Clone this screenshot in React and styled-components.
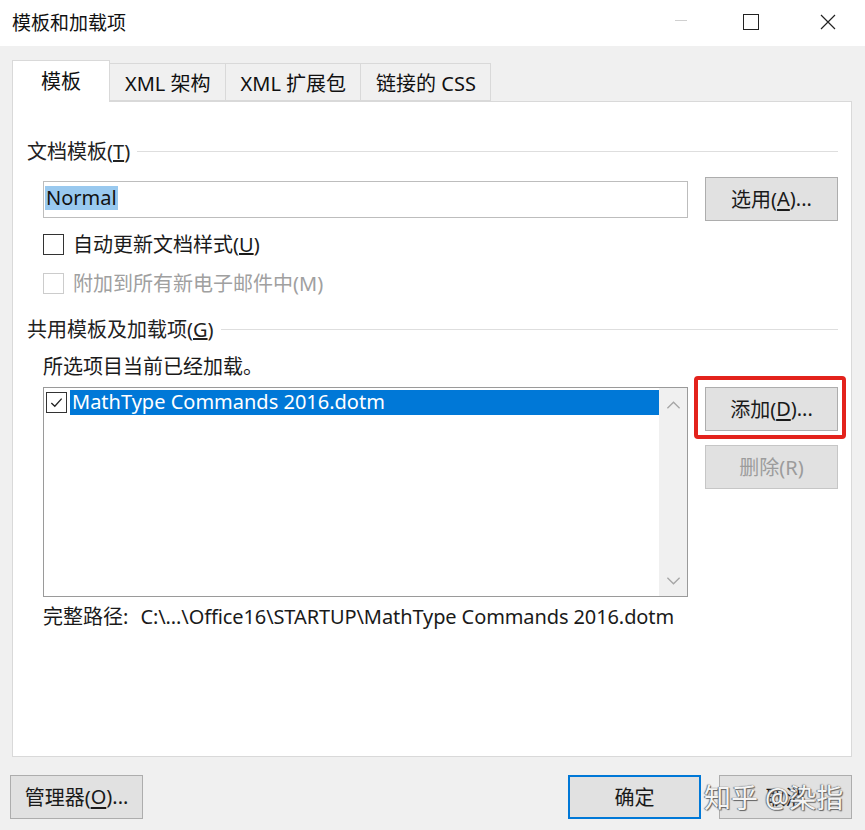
import React from "react";
import styled, { createGlobalStyle } from "styled-components";

const GlobalStyle = createGlobalStyle`
  html, body {
    margin: 0;
    padding: 0;
    background: #ffffff;
  }
  #root {
    width: 865px;
    height: 830px;
  }
  * {
    box-sizing: border-box;
  }
`;

const FONT = `"Noto Sans", "Noto Sans CJK SC", sans-serif`;

function TemplateDialog() {
  return (
    <Window>
      <TitleBar>
        <Title>模板和加载项</Title>
        <Controls>
          <Minimize />
          <Maximize />
          <CloseIcon viewBox="0 0 16 16">
            <path d="M1 1 L15 15 M15 1 L1 15" stroke="#222" strokeWidth="1.2" fill="none" />
          </CloseIcon>
        </Controls>
      </TitleBar>

      <Body>
        <TabBar>
          <Tab active>模板</Tab>
          <Tab>XML 架构</Tab>
          <Tab>XML 扩展包</Tab>
          <Tab>链接的 CSS</Tab>
        </TabBar>

        <Panel>
          <SectionHeader top={34}>
            <span>
              文档模板(<u>T</u>)
            </span>
            <Rule />
          </SectionHeader>

          <FieldRow top={13}>
            <TextBox>
              <Selected>Normal</Selected>
            </TextBox>
            <Button>
              选用(<u>A</u>)...
            </Button>
          </FieldRow>

          <CheckRow top={8}>
            <Box />
            <span>
              自动更新文档样式(<u>U</u>)
            </span>
          </CheckRow>
          <CheckRow top={9} disabled>
            <Box disabled />
            <span>附加到所有新电子邮件中(M)</span>
          </CheckRow>

          <SectionHeader top={16}>
            <span>
              共用模板及加载项(<u>G</u>)
            </span>
            <Rule />
          </SectionHeader>

          <Note>所选项目当前已经加载。</Note>

          <ListRow>
            <ListBox>
              <ListItems>
                <ListItem>
                  <Box checked>
                    <svg viewBox="0 0 16 16" width="15" height="15">
                      <path d="M2.5 8.5 L6.2 12 L13.5 3.8" stroke="#222" strokeWidth="1.4" fill="none" />
                    </svg>
                  </Box>
                  <ItemLabel>MathType Commands 2016.dotm</ItemLabel>
                </ListItem>
              </ListItems>
              <ScrollBar>
                <Chevron viewBox="0 0 16 10">
                  <path d="M1.5 8.5 L8 2 L14.5 8.5" stroke="#a6a6a6" strokeWidth="1.4" fill="none" />
                </Chevron>
                <Chevron viewBox="0 0 16 10">
                  <path d="M1.5 1.5 L8 8 L14.5 1.5" stroke="#a6a6a6" strokeWidth="1.4" fill="none" />
                </Chevron>
              </ScrollBar>
            </ListBox>

            <ButtonColumn>
              <Highlighted>
                <Button>
                  添加(<u>D</u>)...
                </Button>
                <RedFrame />
              </Highlighted>
              <Button disabled>删除(R)</Button>
            </ButtonColumn>
          </ListRow>

          <PathLine>
            <span>完整路径:</span>
            <PathValue>{"C:\\...\\Office16\\STARTUP\\MathType Commands 2016.dotm"}</PathValue>
          </PathLine>
        </Panel>

        <Footer>
          <Button>
            管理器(<u>O</u>)...
          </Button>
          <FooterRight>
            <Button primary>确定</Button>
            <CancelWrap>
              <Button>取消</Button>
              <Watermark>知乎 @染指</Watermark>
            </CancelWrap>
          </FooterRight>
        </Footer>
      </Body>
    </Window>
  );
}

const Window = styled.div`
  width: 865px;
  height: 830px;
  display: flex;
  flex-direction: column;
  font-family: ${FONT};
  font-size: 20px;
  color: #1a1a1a;
  overflow: hidden;
`;

const TitleBar = styled.div`
  height: 46px;
  flex: none;
  display: flex;
  align-items: center;
  justify-content: space-between;
  padding-left: 12px;
  background: #ffffff;
`;

const Title = styled.div`
  font-size: 19px;
  color: #111;
  margin-top: -2px;
`;

const Controls = styled.div`
  display: flex;
  align-items: center;
  height: 100%;
`;

const Minimize = styled.span`
  width: 12px;
  height: 1px;
  background: #d0d0d0;
  margin-right: 56px;
  margin-bottom: 6px;
`;

const Maximize = styled.span`
  width: 16px;
  height: 16px;
  border: 1.3px solid #222;
  margin-right: 61px;
  margin-bottom: 2px;
`;

const CloseIcon = styled.svg`
  width: 16px;
  height: 16px;
  margin-right: 29px;
  margin-bottom: 2px;
`;

const Body = styled.div`
  flex: 1;
  display: flex;
  flex-direction: column;
  background: #f0f0f0;
  padding-top: 14px;
`;

const TabBar = styled.div`
  display: flex;
  align-items: flex-end;
  height: 41px;
  padding-left: 12px;
  position: relative;
  z-index: 1;
`;

const Tab = styled.div`
  height: ${(p) => (p.active ? "42px" : "38px")};
  margin-bottom: ${(p) => (p.active ? "-1px" : "0")};
  padding: ${(p) => (p.active ? "0 28px" : "0 14px 0 15px")};
  display: flex;
  align-items: center;
  background: ${(p) => (p.active ? "#ffffff" : "#f0f0f0")};
  border: 1px solid #d9d9d9;
  border-bottom: ${(p) => (p.active ? "none" : "1px solid #d9d9d9")};
  border-left: ${(p) => (p.active ? "1px solid #d9d9d9" : "none")};
  color: #111;
  padding-bottom: ${(p) => (p.active ? "2px" : "0")};
`;

const Panel = styled.div`
  flex: 1;
  margin: 0 13px 0 12px;
  background: #ffffff;
  border: 1px solid #d9d9d9;
  padding: 0 13px 0 14px;
  display: flex;
  flex-direction: column;
`;

const SectionHeader = styled.div`
  display: flex;
  align-items: center;
  height: 28px;
  margin-top: ${(p) => p.top}px;
  color: #222;
`;

const Rule = styled.div`
  flex: 1;
  height: 1px;
  background: #dedede;
  margin-left: 7px;
  margin-top: 2px;
`;

const FieldRow = styled.div`
  display: grid;
  grid-template-columns: 1fr 133px;
  column-gap: 17px;
  align-items: center;
  margin: ${(p) => p.top}px 0 0 16px;
`;

const TextBox = styled.div`
  height: 37px;
  border: 1px solid #bdbdbd;
  display: flex;
  align-items: center;
  padding-left: 1px;
`;

const Selected = styled.span`
  background: #99c9ef;
  color: #111;
  line-height: 24px;
  padding: 0 1px;
  margin-top: -3px;
`;

const Button = styled.button`
  width: 133px;
  height: 44px;
  font-family: ${FONT};
  font-size: 20px;
  color: ${(p) => (p.disabled ? "#9c9c9c" : "#1a1a1a")};
  background: #e1e1e1;
  border: ${(p) => (p.primary ? "2px solid #0078d7" : p.disabled ? "1px solid #c6c6c6" : "1px solid #adadad")};
  padding: 0 0 2px;
  display: flex;
  align-items: center;
  justify-content: center;

  u {
    text-underline-offset: 3px;
  }
`;

const CheckRow = styled.div`
  display: flex;
  align-items: center;
  gap: 9px;
  height: 30px;
  margin: ${(p) => p.top}px 0 0 16px;
  color: ${(p) => (p.disabled ? "#a0a0a0" : "#1a1a1a")};

  span:last-child {
    margin-top: -2px;
  }
`;

const Box = styled.span`
  width: 21px;
  height: 21px;
  flex: none;
  border: 1px solid ${(p) => (p.disabled ? "#cccccc" : "#333333")};
  background: #ffffff;
  display: flex;
  align-items: center;
  justify-content: center;
`;

const Note = styled.div`
  height: 28px;
  line-height: 28px;
  margin: 11px 0 0 16px;
  color: #1a1a1a;
`;

const ListRow = styled.div`
  display: grid;
  grid-template-columns: 1fr 133px;
  column-gap: 17px;
  align-items: start;
  margin: 6px 0 0 16px;
`;

const ListBox = styled.div`
  height: 210px;
  border: 1px solid #9a9a9a;
  display: flex;
  background: #ffffff;
`;

const ListItems = styled.div`
  flex: 1;
  padding: 2px 0 0 2px;
`;

const ListItem = styled.div`
  display: flex;
  align-items: center;
  gap: 3px;
  height: 25px;
`;

const ItemLabel = styled.span`
  flex: 1;
  height: 25px;
  line-height: 24px;
  background: #0078d7;
  color: #ffffff;
  padding-left: 2px;
`;

const ScrollBar = styled.div`
  width: 28px;
  background: #f0f0f0;
  display: flex;
  flex-direction: column;
  justify-content: space-between;
  align-items: center;
  padding: 12px 0 10px;
`;

const Chevron = styled.svg`
  width: 15px;
  height: 10px;
`;

const ButtonColumn = styled.div`
  display: flex;
  flex-direction: column;
  gap: 14px;
`;

const Highlighted = styled.div`
  position: relative;
`;

const RedFrame = styled.span`
  position: absolute;
  top: -11px;
  bottom: -8px;
  left: -11px;
  right: -8px;
  border: 4px solid #e3221c;
  border-radius: 4px;
  pointer-events: none;
`;

const PathLine = styled.div`
  display: flex;
  height: 28px;
  line-height: 28px;
  margin: 6px 0 0 16px;
  color: #1a1a1a;
`;

const PathValue = styled.span`
  margin-left: 12px;
  letter-spacing: -0.1px;
`;

const Footer = styled.div`
  height: 73px;
  flex: none;
  display: flex;
  justify-content: space-between;
  align-items: flex-start;
  padding: 18px 13px 0 10px;
`;

const FooterRight = styled.div`
  display: flex;
  gap: 18px;
`;

const CancelWrap = styled.div`
  position: relative;
`;

const Watermark = styled.span`
  position: absolute;
  left: -15px;
  top: 2px;
  font-size: 27px;
  color: rgba(255, 255, 255, 0.95);
  white-space: nowrap;
  text-shadow: 0 0 1px #555, 1px 1px 1px #666, -1px 0 1px #888;
  pointer-events: none;
`;

export default function App() {
  return (
    <>
      <GlobalStyle />
      <TemplateDialog />
    </>
  );
}
